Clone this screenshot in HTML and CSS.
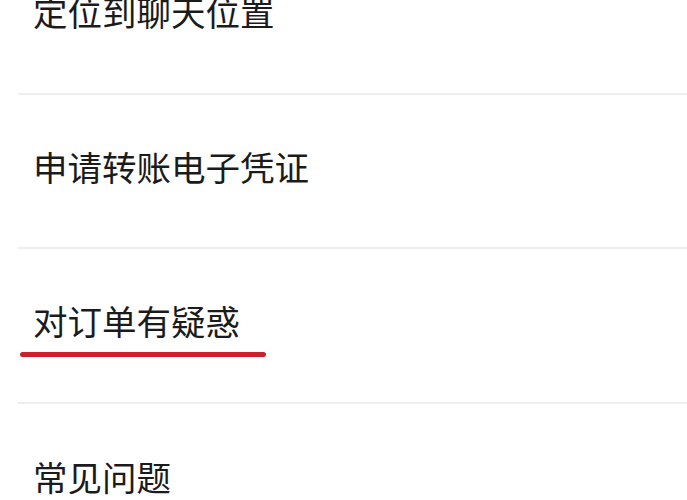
FILE: index.html
```html
<!DOCTYPE html>
<html>
<head>
<meta charset="UTF-8">
<title>更多</title>
<link rel="stylesheet" href="styles.css">
</head>
<body>
<ul class="menu_list">
    <li class="menu_item"><span class="item_label">定位到聊天位置</span></li>
    <li class="menu_item"><span class="item_label">申请转账电子凭证</span></li>
    <li class="menu_item marked"><span class="item_label">对订单有疑惑</span><i class="mark_line"></i></li>
    <li class="menu_item"><span class="item_label">常见问题</span></li>
</ul>
</body>
</html>
```

FILE: styles.css
```css
body {
    margin: 0px;
    padding: 0px;
    background-color: #FFFFFF;
    font-family: "Noto Sans CJK SC", "Noto Sans", sans-serif;
    color: #1b1b1b;
    overflow: hidden;
}

.menu_list {
    list-style: none;
    margin: -60px 0px 0px 18px;
    padding: 0px;
}

.menu_item {
    position: relative;
    display: flex;
    align-items: center;
    height: 154.5px;
    padding: 0px 0px 10px 15px;
    box-sizing: border-box;
    border-bottom: 2px solid #eeeeee;
}

.menu_item:last-child {
    border-bottom: none;
}

.item_label {
    font-size: 34.5px;
    line-height: 34px;
    letter-spacing: 0px;
}

/* red stroke under the selected entry */
.mark_line {
    position: absolute;
    left: 2px;
    top: 103px;
    width: 246px;
    height: 5px;
    border-radius: 3px;
    background-color: #cf1f2c;
}
```
